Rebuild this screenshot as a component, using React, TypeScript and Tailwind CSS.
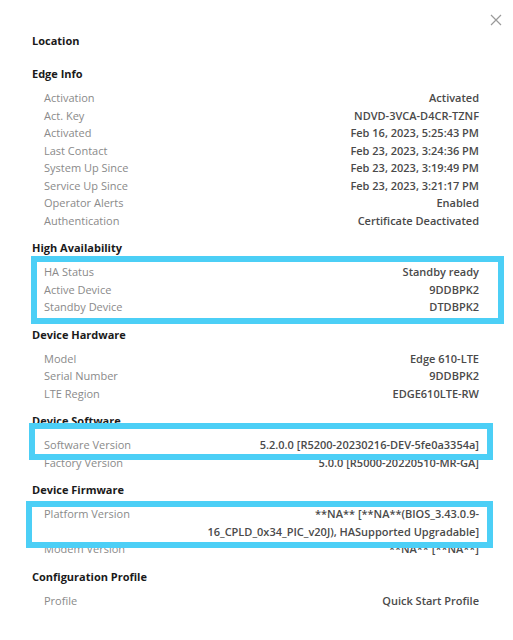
import type { ReactNode } from "react"

type Row = { label: string; value: ReactNode }

const EDGE_INFO: Row[] = [
  { label: "Activation", value: "Activated" },
  { label: "Act. Key", value: "NDVD-3VCA-D4CR-TZNF" },
  { label: "Activated", value: "Feb 16, 2023, 5:25:43 PM" },
  { label: "Last Contact", value: "Feb 23, 2023, 3:24:36 PM" },
  { label: "System Up Since", value: "Feb 23, 2023, 3:19:49 PM" },
  { label: "Service Up Since", value: "Feb 23, 2023, 3:21:17 PM" },
  { label: "Operator Alerts", value: "Enabled" },
  { label: "Authentication", value: "Certificate Deactivated" },
]

const HA: Row[] = [
  { label: "HA Status", value: "Standby ready" },
  { label: "Active Device", value: "9DDBPK2" },
  { label: "Standby Device", value: "DTDBPK2" },
]

const HARDWARE: Row[] = [
  { label: "Model", value: "Edge 610-LTE" },
  { label: "Serial Number", value: "9DDBPK2" },
  { label: "LTE Region", value: "EDGE610LTE-RW" },
]

function InfoRow({ label, value }: Row) {
  return (
    <div className="flex justify-between gap-4 pl-3 text-[11px] leading-[17.5px]">
      <span className="text-[#8a8a8a] whitespace-nowrap">{label}</span>
      <span className="text-right font-semibold text-[#4a4a4a]">{value}</span>
    </div>
  )
}

function Heading({ children, className = "" }: { children: ReactNode; className?: string }) {
  return <h3 className={`text-[11px] font-bold leading-4 text-[#1a1a1a] ${className}`}>{children}</h3>
}

// hand-drawn highlight box that sits over the page
function Highlight({ className }: { className: string }) {
  return <div className={`absolute border-[6px] border-[#4ccff6] bg-white ${className}`} />
}

export default function App() {
  return (
    <div className="relative min-h-screen bg-white pt-[33px] pl-[32px] pr-[34px] font-['Open_Sans','Lato',sans-serif]">
      {/* Close */}
      <button className="absolute top-[14px] right-[11px] text-[#9a9a9a]">
        <svg width="12" height="12" viewBox="0 0 12 12" fill="none" stroke="currentColor" strokeWidth="1.2">
          <path d="M1 1l10 10M11 1L1 11" />
        </svg>
      </button>

      <Heading className="mb-[17px]">Location</Heading>

      <Heading>Edge Info</Heading>
      <div className="mt-[7px]">
        {EDGE_INFO.map((r) => (
          <InfoRow key={r.label} {...r} />
        ))}
      </div>

      <Heading className="mt-[11px]">High Availability</Heading>
      <div className="relative mt-[7px]">
        <Highlight className="-top-[7px] -bottom-[8px] -left-[1px] -right-[25px]" />
        <div className="relative">
          {HA.map((r) => (
            <InfoRow key={r.label} {...r} />
          ))}
        </div>
      </div>

      <Heading className="mt-[11px]">Device Hardware</Heading>
      <div className="mt-[7px]">
        {HARDWARE.map((r) => (
          <InfoRow key={r.label} {...r} />
        ))}
      </div>

      <Heading className="mt-[11px]">Device Software</Heading>
      <div className="mt-[7px]">
        <div className="relative">
          <Highlight className="-top-[13px] -bottom-[6px] -left-[3px] -right-[14px]" />
          <div className="relative">
            <InfoRow label="Software Version" value="5.2.0.0 [R5200-20230216-DEV-5fe0a3354a]" />
          </div>
        </div>
        <InfoRow label="Factory Version" value="5.0.0 [R5000-20220510-MR-GA]" />
      </div>

      <Heading className="mt-[11px]">Device Firmware</Heading>
      <div className="mt-[7px]">
        <div className="relative">
          <Highlight className="-top-[4px] -bottom-[8px] -left-[6px] -right-[14px]" />
          <div className="relative">
            <InfoRow
              label="Platform Version"
              value={
                <>
                  **NA** [**NA**(BIOS_3.43.0.9-
                  <br />
                  16_CPLD_0x34_PIC_v20J), HASupported Upgradable]
                </>
              }
            />
          </div>
        </div>
        <InfoRow label="Modem Version" value="**NA** [**NA**]" />
      </div>

      <Heading className="mt-[11px]">Configuration Profile</Heading>
      <div className="mt-[7px]">
        <InfoRow label="Profile" value="Quick Start Profile" />
      </div>
    </div>
  )
}
